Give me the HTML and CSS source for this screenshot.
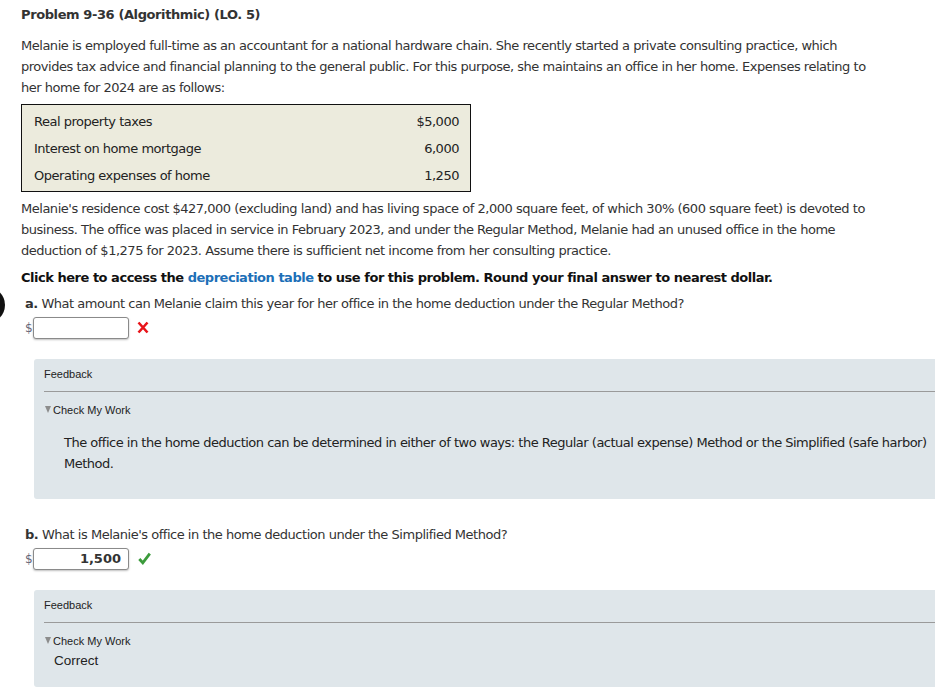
FILE: index.html
```html
<!DOCTYPE html>
<html lang="en">
<head>
<meta charset="utf-8">
<title>Problem 9-36</title>
<link rel="stylesheet" href="styles.css">
</head>
<body>
<div class="edge-dot"></div>
<main class="page">
  <h1 class="title">Problem 9-36 (Algorithmic) (LO. 5)</h1>
  <p class="para">Melanie is employed full-time as an accountant for a national hardware chain. She recently started a private consulting practice, which provides tax advice and financial planning to the general public. For this purpose, she maintains an office in her home. Expenses relating to her home for 2024 are as follows:</p>
  <div class="expenses">
    <div class="exp-row"><span>Real property taxes</span><span>$5,000</span></div>
    <div class="exp-row"><span>Interest on home mortgage</span><span>6,000</span></div>
    <div class="exp-row"><span>Operating expenses of home</span><span>1,250</span></div>
  </div>
  <p class="para para2">Melanie's residence cost $427,000 (excluding land) and has living space of 2,000 square feet, of which 30% (600 square feet) is devoted to business. The office was placed in service in February 2023, and under the Regular Method, Melanie had an unused office in the home deduction of $1,275 for 2023. Assume there is sufficient net income from her consulting practice.</p>
  <p class="instr">Click here to access the <a class="link" href="#">depreciation table</a> to use for this problem. Round your final answer to nearest dollar.</p>

  <section class="question q-a">
    <div class="q-text"><b>a.</b> What amount can Melanie claim this year for her office in the home deduction under the Regular Method?</div>
    <div class="answer-row">
      <span class="dollar">$</span><span class="answer-box"></span>
      <svg class="mark" width="12" height="13" viewBox="0 0 12 13"><path d="M1.5 1.5 L10.5 11.5 M10.5 1.5 L1.5 11.5" stroke="#e8141a" stroke-width="2.6" fill="none"/></svg>
    </div>
    <div class="feedback fb-a">
      <div class="fb-head">Feedback</div>
      <div class="fb-rule"></div>
      <div class="fb-check"><span class="tri"></span>Check My Work</div>
      <p class="fb-text">The office in the home deduction can be determined in either of two ways: the Regular (actual expense) Method or the Simplified (safe harbor) Method.</p>
    </div>
  </section>

  <section class="question q-b">
    <div class="q-text"><b>b.</b> What is Melanie's office in the home deduction under the Simplified Method?</div>
    <div class="answer-row">
      <span class="dollar">$</span><span class="answer-box filled">1,500</span>
      <svg class="mark check" width="13" height="13" viewBox="0 0 13 13"><path d="M1.3 7 L4.8 10.8 L11.8 1.6" stroke="#3b9b3b" stroke-width="2.8" fill="none"/></svg>
    </div>
    <div class="feedback fb-b">
      <div class="fb-head">Feedback</div>
      <div class="fb-rule"></div>
      <div class="fb-check"><span class="tri"></span>Check My Work</div>
      <div class="fb-correct">Correct</div>
    </div>
  </section>
</main>
</body>
</html>
```

FILE: styles.css
```css
html, body {
  margin: 0;
  padding: 0;
  overflow: hidden;
  background: #fff;
}
body {
  font-family: "DejaVu Sans", Verdana, sans-serif;
  font-size: 13px;
  letter-spacing: -0.48px;
  color: #333;
  position: relative;
}
.edge-dot {
  position: absolute;
  left: -31px;
  top: 287px;
  width: 36px;
  height: 36px;
  border-radius: 50%;
  background: #111;
}
.page {
  padding: 6px 0 0 21px;
  width: 1000px;
}
.title {
  margin: 0;
  font-size: 13px;
  line-height: 17px;
  font-weight: bold;
  letter-spacing: -0.4px;
  color: #333;
}
.para {
  margin: 12px 0 0 0;
  width: 850px;
  line-height: 21px;
}
.para2 {
  margin-top: 6px;
}
.expenses {
  margin-top: 6px;
  width: 448px;
  border: 1px solid #111;
  background: #ecebdd;
  padding: 3px 0 2px;
  color: #222;
}
.exp-row {
  display: flex;
  justify-content: space-between;
  height: 27px;
  line-height: 27px;
  padding: 0 11px 0 12px;
}
.instr {
  margin: 6px 0 0 0;
  font-weight: bold;
  line-height: 21px;
  color: #111;
}
.link {
  color: #1c6fb7;
  text-decoration: none;
}
.question {
  padding-left: 4px;
}
.q-a { margin-top: 5px; }
.q-b { margin-top: 25px; }
.q-text {
  line-height: 21px;
}
.q-text b { color: #333; }
.answer-row {
  display: flex;
  align-items: center;
  margin-top: 2px;
  height: 23px;
}
.dollar {
  font-size: 12px;
  color: #667;
  width: 8px;
}
.answer-box {
  box-sizing: border-box;
  width: 96px;
  height: 22px;
  border: 1px solid #8a8a8a;
  border-radius: 3px;
  box-shadow: 0 1px 2px rgba(0,0,0,0.25);
  background: #fff;
  text-align: right;
  padding-right: 7px;
  line-height: 20px;
  font-weight: bold;
  letter-spacing: 0;
  color: #333;
}
.mark {
  margin-left: 8px;
}
.mark.check {
  margin-left: 9px;
}
.feedback {
  margin-top: 20px;
  margin-left: 9px;
  width: 920px;
  background: #dfe6ea;
  border-radius: 3px;
  padding: 8px 10px 10px;
  font-family: "Liberation Sans", Arial, sans-serif;
  letter-spacing: 0;
  color: #222;
}
.fb-head {
  font-size: 11px;
  line-height: 14px;
}
.fb-rule {
  margin-top: 10px;
  height: 1px;
  background: #9a9a9a;
}
.fb-check {
  margin-top: 11px;
  font-size: 11px;
  line-height: 14px;
  display: flex;
  align-items: center;
}
.tri {
  display: inline-block;
  width: 0;
  height: 0;
  border-left: 3.5px solid transparent;
  border-right: 3.5px solid transparent;
  border-top: 7px solid #8c8c8c;
  margin: 0 2px 2px 1px;
}
.fb-text {
  margin: 15px 0;
  padding-left: 20px;
  font-family: "DejaVu Sans", Verdana, sans-serif;
  font-size: 13px;
  letter-spacing: -0.5px;
  line-height: 21px;
  color: #222;
}
.fb-correct {
  margin: 5px 0 8px;
  padding-left: 10px;
  font-size: 13.5px;
  line-height: 16px;
}
```
